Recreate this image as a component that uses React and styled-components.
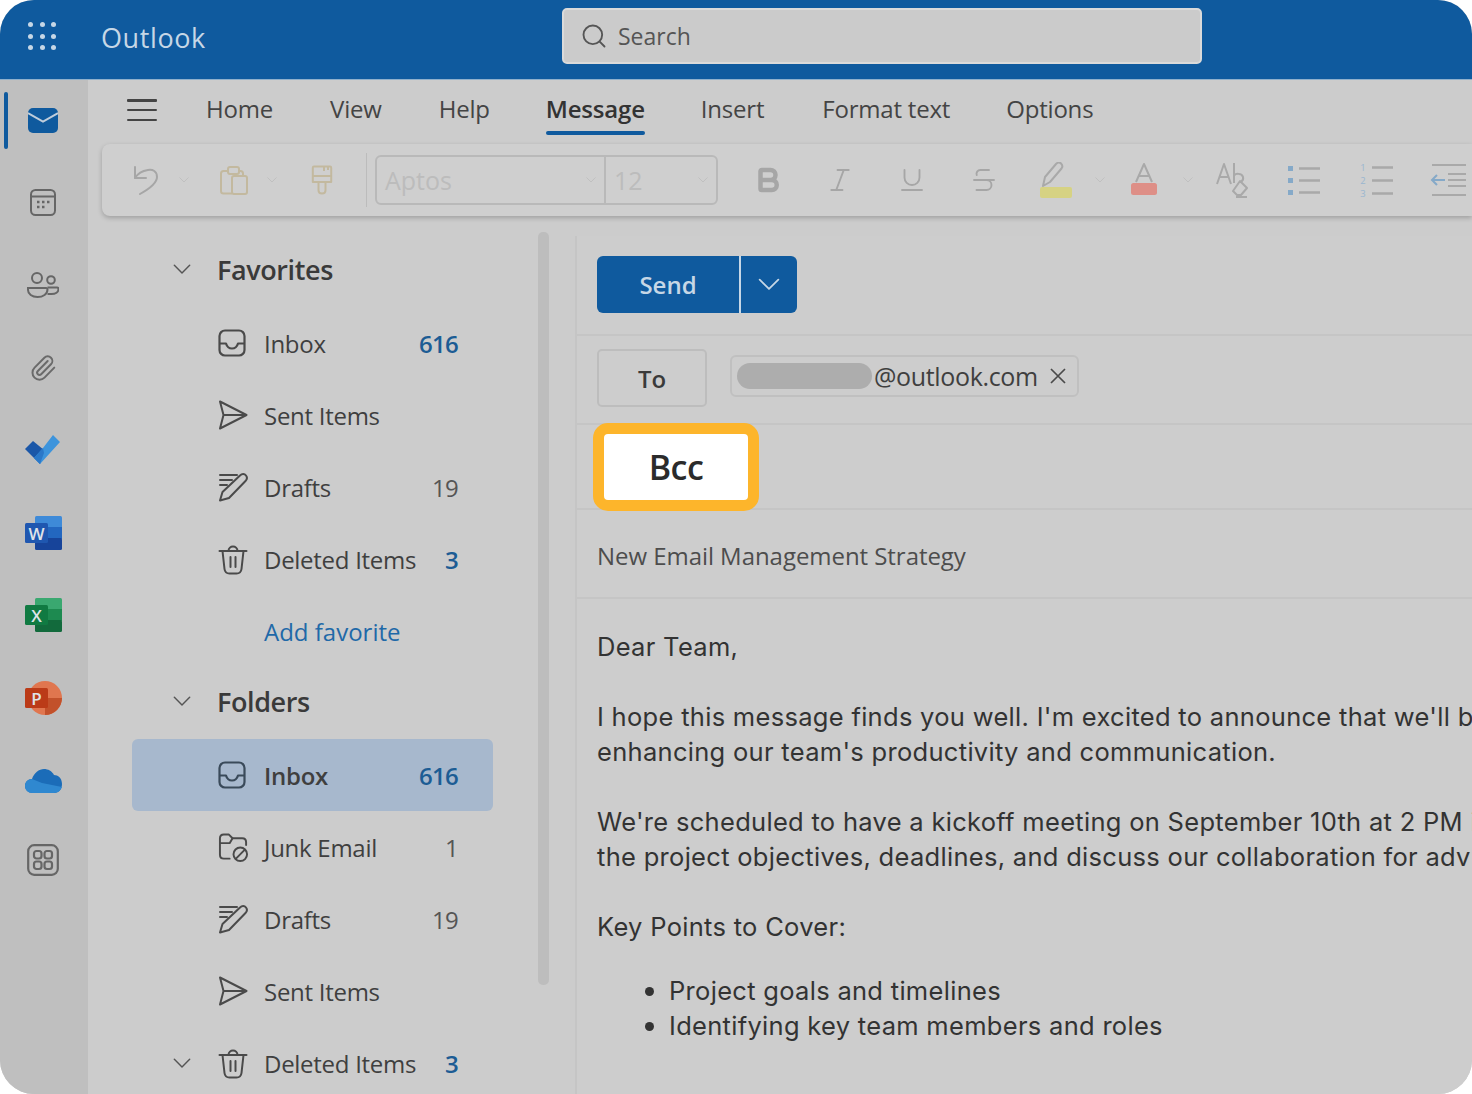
import styled, { createGlobalStyle } from "styled-components";
import { Search, Paperclip, Bold, Italic, Underline, Strikethrough } from "lucide-react";

const GlobalStyle = createGlobalStyle`
  html, body {
    margin: 0;
    padding: 0;
    background: #ffffff;
  }
  * {
    box-sizing: border-box;
  }
`;

const Frame = styled.div`
  width: 1472px;
  height: 1094px;
  border-radius: 34px;
  overflow: hidden;
  display: flex;
  flex-direction: column;
  background: #cccccc;
  font-family: "Open Sans", "Noto Sans", sans-serif;
  color: #3a3a3a;
`;

const Header = styled.header`
  height: 80px;
  flex: none;
  display: flex;
  align-items: center;
  background: #0f5a9e;
  border-bottom: 1px solid #8fb0cc;
  padding-bottom: 7px;
`;

const Dots = styled.div`
  width: 28px;
  margin-left: 28px;
  display: grid;
  grid-template-columns: repeat(3, 5px);
  justify-content: space-between;
  row-gap: 6.5px;

  span {
    width: 5px;
    height: 5px;
    border-radius: 50%;
    background: #c6d7e6;
  }
`;

const Brand = styled.div`
  margin: 2px 0 0 45px;
  width: 461px;
  font-size: 27px;
  color: #c6d7e6;
  letter-spacing: 0.6px;
`;

const SearchBox = styled.div`
  width: 640px;
  height: 56px;
  display: flex;
  align-items: center;
  gap: 10px;
  padding-left: 16px;
  background: #cbcbcb;
  border: 2px solid #dadada;
  border-radius: 5px;
  font-size: 23px;
  color: #555555;
`;

const Body = styled.div`
  flex: 1;
  min-height: 0;
  display: flex;
`;

const Rail = styled.nav`
  width: 88px;
  flex: none;
  position: relative;
  display: flex;
  flex-direction: column;
  padding-right: 2px;
  background: #bfbfbf;
`;

const RailItem = styled.div`
  height: 82.5px;
  flex: none;
  margin-top: ${(p) => p.$nudge || 0}px;
  display: flex;
  align-items: center;
  justify-content: center;
  color: #666666;
`;

const RailMarker = styled.span`
  position: absolute;
  left: 4px;
  top: 12px;
  width: 4px;
  height: 57px;
  border-radius: 2px;
  background: #0f5a9e;
`;

const Main = styled.main`
  flex: 1;
  min-width: 0;
  display: flex;
  flex-direction: column;
`;

const Tabs = styled.div`
  height: 64px;
  flex: none;
  display: flex;
  align-items: center;
  padding: 0 0 8px 39px;
`;

const Burger = styled.div`
  width: 30px;
  height: 22px;
  margin: 4px 50px 0 0;
  display: flex;
  flex-direction: column;
  justify-content: space-between;

  span {
    height: 2.5px;
    background: #444444;
    border-radius: 1px;
  }
`;

const Tab = styled.div`
  position: relative;
  margin-left: ${(p) => p.$shift || 0}px;
  margin-right: ${(p) => p.$gap}px;
  font-size: 24px;
  font-weight: ${(p) => (p.$active ? 600 : 400)};
  color: ${(p) => (p.$active ? "#333333" : "#444444")};
  letter-spacing: -0.2px;
  white-space: nowrap;

  ${(p) =>
    p.$active &&
    `
    &::after {
      content: "";
      position: absolute;
      left: 0;
      right: 0;
      bottom: -10px;
      height: 4px;
      border-radius: 2px;
      background: #0f5a9e;
    }
  `}
`;

const Ribbon = styled.div`
  height: 72px;
  flex: none;
  margin-left: 14px;
  display: flex;
  align-items: center;
  padding-left: 20px;
  background: #cfcfcf;
  border-radius: 8px 0 0 8px;
  box-shadow: 0 2px 5px rgba(0, 0, 0, 0.22);
  overflow: hidden;
`;

const Tool = styled.div`
  width: ${(p) => p.$w || 72}px;
  flex: none;
  height: 50px;
  display: flex;
  align-items: center;
  justify-content: center;
  color: ${(p) => p.$color || "#a6a6a6"};
`;

const Caret = styled.div`
  width: 16px;
  flex: none;
  margin-left: ${(p) => p.$l || 0}px;
  margin-right: ${(p) => p.$r || 0}px;
  display: flex;
  justify-content: center;
`;

const ToolSep = styled.div`
  width: 1px;
  height: 54px;
  flex: none;
  margin: 0 8px 0 16px;
  background: #bcbcbc;
`;

const FontPicker = styled.div`
  width: 343px;
  height: 50px;
  flex: none;
  margin-right: 14px;
  display: flex;
  border: 2px solid #b9b9b9;
  border-radius: 6px;
  font-size: 25px;
  color: #bcbcbc;
`;

const FontCell = styled.div`
  width: ${(p) => p.$w}px;
  flex: none;
  display: flex;
  align-items: center;
  justify-content: space-between;
  padding: 0 8px;
  border-right: ${(p) => (p.$split ? "2px solid #b9b9b9" : "none")};
`;

const Workspace = styled.div`
  flex: 1;
  min-height: 0;
  display: flex;
`;

const FolderPane = styled.aside`
  width: 487px;
  flex: none;
  position: relative;
  overflow: hidden;
  padding: 19px 0 0 44px;
`;

const PaneScroll = styled.span`
  position: absolute;
  left: 450px;
  top: 16px;
  width: 11px;
  height: 753px;
  border-radius: 5px;
  background: #bdbdbd;
`;

const SectionHead = styled.div`
  height: 72px;
  padding: 0 0 4px 41px;
  display: flex;
  align-items: center;
  gap: 26px;
  font-size: 27px;
  font-weight: 600;
  letter-spacing: -0.4px;
  color: #3a3a3a;
`;

const Row = styled.div`
  width: 361px;
  height: 72px;
  flex: none;
  display: flex;
  align-items: center;
  padding: 0 35px 0 ${(p) => (p.$caret ? 41 : 86)}px;
  border-radius: 6px;
  background: ${(p) => (p.$selected ? "#a7b8cd" : "transparent")};
  color: #3f3f3f;
  font-size: 24px;
  font-weight: ${(p) => (p.$selected ? 600 : 400)};
  letter-spacing: -0.28px;
`;

const RowIcon = styled.span`
  width: 31px;
  height: 32px;
  flex: none;
  margin-left: ${(p) => (p.$caret ? 27 : 0)}px;
  margin-right: 15px;
  display: flex;
  align-items: center;
  justify-content: flex-start;
`;

const RowLabel = styled.span`
  flex: 1;
  white-space: nowrap;
`;

const AddLink = styled(RowLabel)`
  color: #1f69a8;
  padding-left: 46px;
  letter-spacing: 0;
`;

const Count = styled.span`
  font-weight: ${(p) => (p.$unread ? 600 : 400)};
  color: ${(p) => (p.$unread ? "#1c5c94" : "#555555")};
  letter-spacing: -0.7px;
`;

const Compose = styled.section`
  flex: 1;
  min-width: 0;
  margin-top: 20px;
  overflow: hidden;
  border-left: 2px solid #c5c5c5;
  background: #cdcdcd;
`;

const SendRow = styled.div`
  height: 100px;
  padding: 20px 0 0 20px;
  border-bottom: 2px solid #c5c5c5;
`;

const SendButton = styled.div`
  width: 200px;
  height: 57px;
  display: flex;
  border-radius: 6px;
  overflow: hidden;
  background: #0f5a9e;
  color: #c6d7e6;
  font-size: 24px;
  font-weight: 600;
`;

const SendLabel = styled.div`
  width: 144px;
  display: flex;
  align-items: center;
  justify-content: center;
  border-right: 2px solid #c6d7e6;
`;

const SendCaret = styled.div`
  flex: 1;
  display: flex;
  align-items: center;
  justify-content: center;
`;

const RecipientRow = styled.div`
  height: 89px;
  padding: 13px 0 0 20px;
  display: flex;
  align-items: flex-start;
  gap: 23px;
  border-bottom: 2px solid #c5c5c5;
`;

const ToButton = styled.div`
  width: 110px;
  height: 58px;
  display: flex;
  align-items: center;
  justify-content: center;
  border: 2px solid #bdbdbd;
  border-radius: 5px;
  font-size: 24px;
  font-weight: 600;
  color: #3a3a3a;
`;

const Chip = styled.div`
  width: 349px;
  height: 42px;
  margin-top: 6px;
  display: flex;
  align-items: center;
  padding-left: 5px;
  border: 2px solid #c0c0c0;
  border-radius: 6px;
  font-size: 25px;
  letter-spacing: -0.35px;
  color: #3f3f3f;
`;

const Redacted = styled.span`
  width: 135px;
  height: 26px;
  flex: none;
  margin-right: 2px;
  border-radius: 13px;
  background: #adadad;
`;

const ChipClose = styled.span`
  margin-left: 11px;
  display: flex;
`;

const BccRow = styled.div`
  height: 87px;
  padding-left: 16px;
  border-bottom: 2px solid #c5c5c5;
`;

const BccButton = styled.div`
  width: 166px;
  height: 88px;
  margin-top: -2px;
  display: flex;
  align-items: center;
  justify-content: center;
  background: #ffffff;
  border: 11px solid #fdb52b;
  border-radius: 15px;
  font-size: 34px;
  font-weight: 600;
  letter-spacing: -0.5px;
  color: #2b2b2b;
`;

const SubjectRow = styled.div`
  height: 89px;
  display: flex;
  align-items: center;
  padding: 3px 0 0 20px;
  border-bottom: 2px solid #c5c5c5;
  font-size: 24px;
  letter-spacing: -0.05px;
  color: #4d4d4d;
`;

const Message = styled.div`
  padding: 30px 0 0 20px;
  font-family: "Inter", "Open Sans", sans-serif;
  font-size: 25.5px;
  line-height: 35px;
  letter-spacing: 0.3px;
  color: #333333;
  white-space: nowrap;
`;

const Para = styled.p`
  margin: 0 0 35px;
`;

const Points = styled.ul`
  margin: -6.5px 0 0;
  padding-left: 72px;
  list-style: none;

  li {
    position: relative;
  }

  li::before {
    content: "";
    position: absolute;
    left: -24px;
    top: 14px;
    width: 9px;
    height: 9px;
    border-radius: 50%;
    background: #333333;
  }
`;

const Chevron = ({ size = 18, color = "#555555", width = 1.6 }) => (
  <svg width={size} height={size * 0.6} viewBox="0 0 20 12" fill="none">
    <path d="M1.5 1.5 10 10l8.5-8.5" stroke={color} strokeWidth={width} strokeLinecap="round" strokeLinejoin="round" />
  </svg>
);

const InboxIcon = ({ color = "#4a4a4a" }) => (
  <svg width="28" height="28" viewBox="0 0 28 28" fill="none" stroke={color} strokeWidth="2.2" strokeLinejoin="round">
    <rect x="1.5" y="1.5" width="25" height="25" rx="5.5" />
    <path d="M1.5 14.5h6.5c1 3.5 3 5 6 5s5-1.5 6-5h6.500" />
  </svg>
);

const SendIcon = () => (
  <svg width="30" height="30" viewBox="0 0 30 30" fill="none" stroke="#4a4a4a" strokeWidth="2" strokeLinejoin="round">
    <path d="M2 1.500 28.500 15 2 28.500 5.500 15Z" />
    <path d="M5.500 15h23" />
  </svg>
);

const DraftIcon = () => (
  <svg width="31" height="30" viewBox="0 0 31 30" fill="none" stroke="#4a4a4a" strokeWidth="2" strokeLinejoin="round" strokeLinecap="round">
    <path d="M2 28.500 4.500 20 22 3.500c2-2 4.500-2 6 0s1 4-.5 5.500L11 26Z" />
    <path d="M2 3h17M2 8h12M2 13h7" />
  </svg>
);

const TrashIcon = () => (
  <svg width="30" height="31" viewBox="0 0 30 31" fill="none" stroke="#4a4a4a" strokeWidth="2" strokeLinejoin="round" strokeLinecap="round">
    <path d="M1.500 7h27" />
    <path d="M10.500 7c0-6 9-6 9 0" />
    <path d="M4.500 7 6.500 25c.3 2.500 2 4.500 5 4.500h7c3 0 4.700-2 5-4.500l2-18" />
    <path d="M12.500 13v10M17.500 13v10" />
  </svg>
);

const JunkIcon = () => (
  <svg width="32" height="31" viewBox="0 0 32 31" fill="none" stroke="#4a4a4a" strokeWidth="2" strokeLinejoin="round" strokeLinecap="round">
    <path d="M12 27H6c-2.500 0-4-1.500-4-4V6c0-2.500 1.500-4 4-4h5l4 4h10c2.500 0 4 1.500 4 4v3" />
    <path d="M2 11h10l3-5" />
    <circle cx="23" cy="22.500" r="7" />
    <path d="m18.500 27 9-9" />
  </svg>
);

const MailIcon = () => (
  <svg width="30" height="25" viewBox="0 0 30 25">
    <rect width="30" height="25" rx="5" fill="#0f5a9e" />
    <path d="M0 5 15 13.500 30 5" fill="none" stroke="#bfcddb" strokeWidth="2" />
  </svg>
);

const CalendarIcon = () => (
  <svg width="26" height="27" viewBox="0 0 26 27" fill="none" stroke="#666666" strokeWidth="2">
    <rect x="1" y="1" width="24" height="25" rx="4.500" />
    <path d="M1 7.500h24" />
    <path d="M7 13h2.500M12 13h2.500M17 13h2.500M7 18h2.500M12 18h2.500" strokeWidth="2.500" />
  </svg>
);

const PeopleIcon = () => (
  <svg width="32" height="26" viewBox="0 0 32 26" fill="none" stroke="#666666" strokeWidth="2">
    <circle cx="10" cy="6" r="5" />
    <circle cx="24" cy="8" r="3.800" />
    <path d="M1 16h18c1 0 1.500.5 1.500 1.500C20.500 22 16 25 10.500 25S1 22 1 18Z" />
    <path d="M20.500 15.500h9.500c1 0 1.500.5 1.500 1.500 0 3-3 5-7 5h-4" />
  </svg>
);

const TodoIcon = () => (
  <svg width="36" height="30" viewBox="0 0 36 30">
    <path d="M0 14 8 6l11 9-4 14Z" fill="#1b57a8" />
    <path d="M18 13 28 0l7 7-20 22-6-6Z" fill="#3d94dc" />
    <path d="M9 23l9-10 1 5-4 11Z" fill="#2b78c8" />
  </svg>
);

const OfficeIcon = ({ bands, front, letter, round }) => (
  <svg width="37" height="34" viewBox="0 0 37 34">
    {round ? (
      <>
        <circle cx="20" cy="17" r="17" fill={bands[0]} />
        <path d="M20 17h17A17 17 0 0 1 20 34Z" fill={bands[1]} />
      </>
    ) : (
      <>
        <rect x="10" width="27" height="12" rx="1.500" fill={bands[0]} />
        <rect x="10" y="11" width="27" height="12" fill={bands[1]} />
        <rect x="10" y="22" width="27" height="12" rx="1.500" fill={bands[2]} />
      </>
    )}
    <rect y="7" width="23" height="20" rx="1.500" fill={front} />
    <text x="11.500" y="23.500" textAnchor="middle" fontSize="17" fontWeight="600" fontFamily="Open Sans, sans-serif" fill="#dfe3e8">
      {letter}
    </text>
  </svg>
);

const CloudIcon = () => (
  <svg width="37" height="25" viewBox="0 0 37 25">
    <path d="M8 25C3 25 0 21.500 0 18c0-4 3-7 7-7 2-6 7-10 12-10 4 0 8 2 10 6 4 0 8 3 8 9 0 5-3 9-8 9Z" fill="#1b6cb8" />
    <path d="M7 25c-4 0-7-3-7-7 0-4 3-7 7-7l10 4 20 4c-1 3-4 6-8 6Z" fill="#2f88d0" />
  </svg>
);

const AppsIcon = () => (
  <svg width="32" height="32" viewBox="0 0 32 32" fill="none" stroke="#666666" strokeWidth="2.200">
    <rect x="1.200" y="1.200" width="29.600" height="29.600" rx="6" />
    <rect x="7" y="7" width="7.500" height="7.500" rx="2.500" />
    <rect x="17.500" y="7" width="7.500" height="7.500" rx="2.500" />
    <rect x="7" y="17.500" width="7.500" height="7.500" rx="2.500" />
    <rect x="17.500" y="17.500" width="7.500" height="7.500" rx="2.500" />
  </svg>
);

const UndoIcon = () => (
  <svg width="28" height="32" viewBox="0 0 28 32" fill="none" stroke="#a6a6a6" strokeWidth="2" strokeLinecap="round" strokeLinejoin="round">
    <path d="M3 3v11h11" />
    <path d="M3 14C8 6 25 1 25 13c0 6-8 12-17 17" />
  </svg>
);

const ClipboardIcon = () => (
  <svg width="28" height="30" viewBox="0 0 28 30" fill="none" stroke="#c3b99f" strokeWidth="2" strokeLinejoin="round">
    <path d="M9 6H3.500C2 6 1 7 1 8.500V26c0 1.500 1 2.500 2.500 2.500H12" />
    <path d="M19 6h1.500C22 6 23 7 23 8.500V11" />
    <rect x="8" y="2" width="11" height="7" rx="2" />
    <rect x="12" y="11" width="15" height="18" rx="2" />
  </svg>
);

const BrushIcon = () => (
  <svg width="22" height="30" viewBox="0 0 22 30" fill="none" stroke="#c3b99f" strokeWidth="2" strokeLinejoin="round">
    <path d="M3 1.500h16c.7 0 1.200.5 1.200 1.200V17H1.800V2.700C1.800 2 2.300 1.500 3 1.500Z" />
    <path d="M1.800 11h18.400M13 1.500V6M17 1.500V5" />
    <path d="M7.500 17v8c0 2 1.500 3.500 3.500 3.500s3.500-1.500 3.500-3.500v-8" />
  </svg>
);

const HighlightIcon = () => (
  <svg width="34" height="36" viewBox="0 0 34 36" fill="none">
    <path d="M4 24 6 15 17 2c2-2 4-1.500 5-.5s2 3 .5 5L11 20Z" stroke="#a9a9a9" strokeWidth="2" strokeLinejoin="round" />
    <rect x="1" y="25" width="32" height="11" rx="2" fill="#d6d283" />
  </svg>
);

const FontColorIcon = () => (
  <svg width="30" height="36" viewBox="0 0 30 36" fill="none">
    <path d="M7 20 15 2l8 18M10 14h10" stroke="#a9a9a9" strokeWidth="2" strokeLinejoin="round" />
    <rect x="2" y="21" width="26" height="12" rx="2.500" fill="#de8f87" />
  </svg>
);

const StylesIcon = () => (
  <svg width="34" height="38" viewBox="0 0 34 38" fill="none" stroke="#a9a9a9" strokeWidth="2" strokeLinejoin="round">
    <path d="M2 23 9 3l7 20M4.500 16h9" />
    <path d="M19 2v20M19 15c1-3 8-3 9 1 .5 2-.5 4-2 5" />
    <path d="M25 20l7 7-6 7h-4l-4-4ZM21 36h11" />
  </svg>
);

const BulletIcon = () => (
  <svg width="34" height="32" viewBox="0 0 34 32" fill="none">
    <rect x="1" y="2" width="5" height="5" fill="#85a9c8" />
    <rect x="1" y="14" width="5" height="5" fill="#85a9c8" />
    <rect x="1" y="26" width="5" height="5" fill="#85a9c8" />
    <path d="M12 4.500h21M12 16.500h21M12 28.500h21" stroke="#a9a9a9" strokeWidth="2.500" />
  </svg>
);

const NumberIcon = () => (
  <svg width="36" height="48" viewBox="0 -6 36 48" fill="none">
    <text x="5" y="9" fontSize="9.500" fontFamily="Open Sans, sans-serif" textAnchor="middle" fill="#9ab6cf">1</text>
    <text x="5" y="22" fontSize="9.500" fontFamily="Open Sans, sans-serif" textAnchor="middle" fill="#9ab6cf">2</text>
    <text x="5" y="35" fontSize="9.500" fontFamily="Open Sans, sans-serif" textAnchor="middle" fill="#9ab6cf">3</text>
    <path d="M14 5.500h21M14 18.500h21M14 31.500h21" stroke="#a9a9a9" strokeWidth="2.500" />
  </svg>
);

const OutdentIcon = () => (
  <svg width="36" height="34" viewBox="0 0 36 34" fill="none">
    <path d="M2 2h34M2 32h34M18 11h18M18 17h18M18 23h18" stroke="#a9a9a9" strokeWidth="2" />
    <path d="M2 17h13M7 12l-5 5 5 5" stroke="#85a9c8" strokeWidth="2" />
  </svg>
);

const favorites = [
  { icon: <InboxIcon />, label: "Inbox", count: "616", unread: true },
  { icon: <SendIcon />, label: "Sent Items" },
  { icon: <DraftIcon />, label: "Drafts", count: "19" },
  { icon: <TrashIcon />, label: "Deleted Items", count: "3", unread: true },
];

const folders = [
  { icon: <InboxIcon color="#3a4a5a" />, label: "Inbox", count: "616", unread: true, selected: true },
  { icon: <JunkIcon />, label: "Junk Email", count: "1" },
  { icon: <DraftIcon />, label: "Drafts", count: "19" },
  { icon: <SendIcon />, label: "Sent Items" },
  { icon: <TrashIcon />, label: "Deleted Items", count: "3", unread: true, caret: true },
];

const FolderRow = ({ item }) => (
  <Row $selected={item.selected} $caret={item.caret}>
    {item.caret && <Chevron />}
    <RowIcon $caret={item.caret}>{item.icon}</RowIcon>
    <RowLabel>{item.label}</RowLabel>
    {item.count && <Count $unread={item.unread}>{item.count}</Count>}
  </Row>
);

const App = () => {
  return (
    <Frame>
      <GlobalStyle />
      <Header>
        <Dots>
          {Array.from({ length: 9 }).map((_, i) => (
            <span key={i} />
          ))}
        </Dots>
        <Brand>Outlook</Brand>
        <SearchBox>
          <Search size={28} strokeWidth={1.6} color="#555555" />
          Search
        </SearchBox>
      </Header>
      <Body>
        <Rail>
          <RailMarker />
          <RailItem $nudge={-1}><MailIcon /></RailItem>
          <RailItem><CalendarIcon /></RailItem>
          <RailItem><PeopleIcon /></RailItem>
          <RailItem><Paperclip size={28} strokeWidth={1.7} color="#6a6a6a" /></RailItem>
          <RailItem><TodoIcon /></RailItem>
          <RailItem><OfficeIcon bands={["#3e8ad8", "#2367c0", "#17449a"]} front="#1f57b0" letter="W" /></RailItem>
          <RailItem><OfficeIcon bands={["#3aa870", "#1d8a50", "#126a3c"]} front="#107a42" letter="X" /></RailItem>
          <RailItem><OfficeIcon round bands={["#e0764f", "#c2512b"]} front="#bb3b18" letter="P" /></RailItem>
          <RailItem><CloudIcon /></RailItem>
          <RailItem $nudge={-3}><AppsIcon /></RailItem>
        </Rail>
        <Main>
          <Tabs>
            <Burger><span /><span /><span /></Burger>
            <Tab $gap={57} $shift={-1}>Home</Tab>
            <Tab $gap={57}>View</Tab>
            <Tab $gap={56}>Help</Tab>
            <Tab $gap={56} $active>Message</Tab>
            <Tab $gap={58}>Insert</Tab>
            <Tab $gap={56}>Format text</Tab>
            <Tab $gap={0}>Options</Tab>
          </Tabs>
          <Ribbon>
            <Tool $w={48}><UndoIcon /></Tool>
            <Caret $l={6} $r={14}><Chevron size={10} color="#bdbdbd" /></Caret>
            <Tool $w={56}><ClipboardIcon /></Tool>
            <Caret $l={2} $r={14}><Chevron size={10} color="#bdbdbd" /></Caret>
            <Tool $w={56}><BrushIcon /></Tool>
            <ToolSep />
            <FontPicker>
              <FontCell $w={229} $split>
                Aptos
                <Chevron size={10} color="#bdbdbd" />
              </FontCell>
              <FontCell $w={110}>
                12
                <Chevron size={10} color="#bdbdbd" />
              </FontCell>
            </FontPicker>
            <Tool><Bold size={30} strokeWidth={3.6} /></Tool>
            <Tool><Italic size={30} strokeWidth={1.5} /></Tool>
            <Tool><Underline size={30} strokeWidth={1.5} /></Tool>
            <Tool><Strikethrough size={30} strokeWidth={1.5} /></Tool>
            <Tool><HighlightIcon /></Tool>
            <Caret><Chevron size={10} color="#bdbdbd" /></Caret>
            <Tool><FontColorIcon /></Tool>
            <Caret><Chevron size={10} color="#bdbdbd" /></Caret>
            <Tool><StylesIcon /></Tool>
            <Tool><BulletIcon /></Tool>
            <Tool><NumberIcon /></Tool>
            <Tool><OutdentIcon /></Tool>
          </Ribbon>
          <Workspace>
            <FolderPane>
              <PaneScroll />
              <SectionHead><Chevron />Favorites</SectionHead>
              {favorites.map((item) => (
                <FolderRow key={item.label} item={item} />
              ))}
              <Row><AddLink>Add favorite</AddLink></Row>
              <SectionHead><Chevron />Folders</SectionHead>
              {folders.map((item) => (
                <FolderRow key={item.label} item={item} />
              ))}
            </FolderPane>
            <Compose>
              <SendRow>
                <SendButton>
                  <SendLabel>Send</SendLabel>
                  <SendCaret><Chevron size={22} color="#c6d7e6" /></SendCaret>
                </SendButton>
              </SendRow>
              <RecipientRow>
                <ToButton>To</ToButton>
                <Chip>
                  <Redacted />
                  @outlook.com
                  <ChipClose>
                    <svg width="18" height="18" viewBox="0 0 18 18" stroke="#4a4a4a" strokeWidth="1.700">
                      <path d="M2 2l14 14M16 2 2 16" />
                    </svg>
                  </ChipClose>
                </Chip>
              </RecipientRow>
              <BccRow>
                <BccButton>Bcc</BccButton>
              </BccRow>
              <SubjectRow>New Email Management Strategy</SubjectRow>
              <Message>
                <Para>Dear Team,</Para>
                <Para>
                  I hope this message finds you well. I'm excited to announce that we'll be
                  <br />
                  enhancing our team's productivity and communication.
                </Para>
                <Para>
                  We're scheduled to have a kickoff meeting on September 10th at 2 PM in
                  <br />
                  the project objectives, deadlines, and discuss our collaboration for adv
                </Para>
                <Para>Key Points to Cover:</Para>
                <Points>
                  <li>Project goals and timelines</li>
                  <li>Identifying key team members and roles</li>
                </Points>
              </Message>
            </Compose>
          </Workspace>
        </Main>
      </Body>
    </Frame>
  );
};

export default App;
